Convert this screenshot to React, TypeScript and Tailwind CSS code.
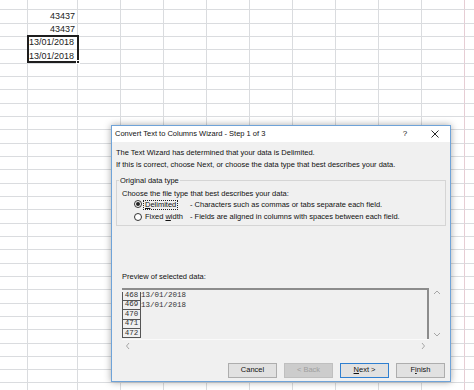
const COLS = [28, 50, 43, 43, 43, 43, 43, 43, 43, 43, 43, 20]
const ROWS = 30

const cellText: Record<string, { text: string; align: 'left' | 'right' }> = {
  '1-1': { text: '43437', align: 'right' },
  '2-1': { text: '43437', align: 'right' },
  '3-1': { text: '13/01/2018', align: 'left' },
  '4-1': { text: '13/01/2018', align: 'left' },
}

function Sheet() {
  return (
    <div className="relative w-full h-[390px] overflow-hidden bg-white font-['Liberation_Sans',Arial,sans-serif] text-[9px] text-[#222]">
      {Array.from({ length: ROWS }).map((_, r) => (
        <div key={r} className={`flex ${r === 0 ? 'h-[10.3px]' : 'h-[13.33px]'}`}>
          {COLS.map((w, c) => {
            const cell = cellText[`${r}-${c}`]
            return (
              <div
                key={c}
                style={{ width: w }}
                className={`shrink-0 border-b border-r border-[#dadcdf] flex items-center overflow-visible whitespace-nowrap ${c === 10 ? 'border-r-[#e6cdd4]' : ''} ${cell?.align === 'right' ? 'justify-end pr-[2px]' : 'pl-[1px]'}`}
              >
                {cell?.text}
              </div>
            )
          })}
        </div>
      ))}
      {/* selected range */}
      <div className="absolute left-[27px] top-[35px] w-[52px] h-[28px] border-2 border-[#1e1e1e]" />
      <div className="absolute left-[76px] top-[60px] w-[4px] h-[4px] bg-[#1e1e1e] border border-white" />
    </div>
  )
}

function Radio({ checked }: { checked?: boolean }) {
  return (
    <span className="w-[8px] h-[8px] rounded-full border border-[#333] bg-white flex items-center justify-center shrink-0">
      {checked && <span className="w-[4px] h-[4px] rounded-full bg-[#222]" />}
    </span>
  )
}

function Btn({ label, u, primary, disabled }: { label: string; u?: number; primary?: boolean; disabled?: boolean }) {
  const parts = u === undefined ? [label] : [label.slice(0, u), label[u], label.slice(u + 1)]
  return (
    <div
      className={`w-[49px] h-[15px] flex items-center justify-center text-[7.5px] ${
        disabled
          ? 'bg-[#cccccc] border border-[#bfbfbf] text-[#a0a0a0]'
          : primary
            ? 'bg-[#e1e1e1] border-[1.5px] border-[#2f7fd0] text-[#111]'
            : 'bg-[#e1e1e1] border border-[#adadad] text-[#111]'
      }`}
    >
      {u === undefined ? (
        parts[0]
      ) : (
        <span>
          {parts[0]}
          <span className="underline">{parts[1]}</span>
          {parts[2]}
        </span>
      )}
    </div>
  )
}

function Preview() {
  const rows = [
    { n: '468', v: '13/01/2018' },
    { n: '469', v: '13/01/2018' },
    { n: '470', v: '' },
    { n: '471', v: '' },
    { n: '472', v: '' },
  ]
  return (
    <div className="ml-[10px] mt-[6px] w-[323px] h-[64px] flex flex-col">
      <div className="flex h-[51px]">
        <div className="w-[307px] border-t-2 border-r-2 border-[#8c8c8c] bg-[#f0f0f0] font-['Liberation_Mono','Courier_New',monospace] text-[7.5px] text-[#333] pt-[2px] overflow-hidden">
          {rows.map(r => (
            <div key={r.n} className="flex h-[9.4px] items-center">
              <div className="w-[19px] h-full border-x border-b border-[#555] flex items-center justify-center leading-none">
                {r.n}
              </div>
              <div className="leading-none">{r.v}</div>
            </div>
          ))}
        </div>
        <div className="w-[16px] flex flex-col items-center justify-between py-[1px] text-[#a6a6a6]">
          <svg width="8" height="6" viewBox="0 0 8 6"><path d="M1 5 L4 2 L7 5" fill="none" stroke="currentColor" strokeWidth="1" /></svg>
          <svg width="8" height="6" viewBox="0 0 8 6"><path d="M1 1 L4 4 L7 1" fill="none" stroke="currentColor" strokeWidth="1" /></svg>
        </div>
      </div>
      <div className="w-[307px] h-[13px] border-t border-[#fafafa] flex items-center justify-between px-[3px] text-[#a6a6a6]">
        <svg width="6" height="8" viewBox="0 0 6 8"><path d="M4 1 L1.5 4 L4 7" fill="none" stroke="currentColor" strokeWidth="1" /></svg>
        <svg width="6" height="8" viewBox="0 0 6 8"><path d="M2 1 L4.5 4 L2 7" fill="none" stroke="currentColor" strokeWidth="1" /></svg>
      </div>
    </div>
  )
}

function Wizard() {
  return (
    <div className="absolute left-[111px] top-[125px] w-[340px] h-[257px] border border-[#6fa3d8] bg-[#f0f0f0] shadow-[0_0_7px_rgba(0,0,0,0.35)] flex flex-col font-['Liberation_Sans',Arial,sans-serif] text-[7.5px] text-[#111]">
      <div className="h-[16px] bg-white flex items-center shrink-0">
        <div className="flex-1 pl-[3px] text-[7.5px]">Convert Text to Columns Wizard - Step 1 of 3</div>
        <div className="w-[30px] text-center text-[8px]">?</div>
        <div className="w-[30px] flex items-center justify-center">
          <svg width="8" height="8" viewBox="0 0 8 8">
            <path d="M0.5 0.5 L7.5 7.5 M7.5 0.5 L0.5 7.5" stroke="#111" strokeWidth="0.9" />
          </svg>
        </div>
      </div>
      <div className="px-[4px] flex flex-col">
        <p className="mt-[5px] leading-[11px]">The Text Wizard has determined that your data is Delimited.</p>
        <p className="mt-[0.5px] leading-[11px]">If this is correct, choose Next, or choose the data type that best describes your data.</p>
        <fieldset className="mt-[5px] border border-[#d5d5d5] pl-[5px] pb-[2px]">
          <legend className="-ml-[3px] px-[1px] leading-[11px]">Original data type</legend>
          <div className="mt-[2px] leading-[11px]">Choose the file type that best describes your data:</div>
          <div className="flex items-center h-[11.5px] whitespace-nowrap">
            <div className="w-[12px] shrink-0" />
            <Radio checked />
            <div className="w-[48px] shrink-0 pl-[1px]">
              <span className="inline-block px-[1px] border border-dotted border-[#222] leading-[8px]">
                <span className="underline">D</span>elimited
              </span>
            </div>
            <span>- Characters such as commas or tabs separate each field.</span>
          </div>
          <div className="flex items-center h-[11.5px] mt-[1px] whitespace-nowrap">
            <div className="w-[12px] shrink-0" />
            <Radio />
            <div className="w-[48px] shrink-0 pl-[2px]">
              <span className="inline-block px-[1px] leading-[8px]">
                Fixed <span className="underline">w</span>idth
              </span>
            </div>
            <span>- Fields are aligned in columns with spaces between each field.</span>
          </div>
        </fieldset>
        <div className="mt-[45px] ml-[6px] leading-[11px]">Preview of selected data:</div>
      </div>
      <Preview />
      <div className="mt-[11px] flex justify-end gap-[7px] pr-[5px]">
        <Btn label="Cancel" />
        <Btn label="< Back" disabled />
        <Btn label="Next >" u={0} primary />
        <Btn label="Finish" u={1} />
      </div>
    </div>
  )
}

export default function App() {
  return (
    <div className="relative w-[474px] h-[390px] overflow-hidden">
      <Sheet />
      <Wizard />
    </div>
  )
}
